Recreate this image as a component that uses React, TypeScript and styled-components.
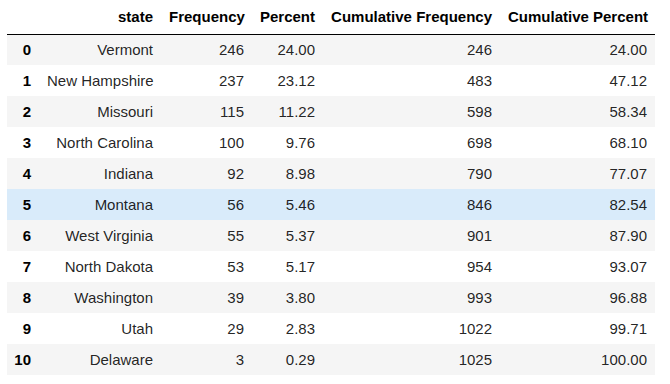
import React from "react";
import styled, { createGlobalStyle } from "styled-components";

const Global = createGlobalStyle`
  html, body { margin: 0; padding: 0; background: #fff; }
  body { font-family: "Liberation Sans", Arial, sans-serif; }
`;

const Wrap = styled.div`
  padding: 0 0 0 7px;
`;

const Table = styled.table`
  border-collapse: collapse;
  border-spacing: 0;
  table-layout: fixed;
  width: 648px;
  font-size: 15px;
  color: rgba(0, 0, 0, 0.87);
`;

const HeadRow = styled.tr`
  height: 34px;
  border-bottom: 1px solid #000;
`;

const HeadCell = styled.th`
  text-align: right;
  font-weight: bold;
  color: #000;
  padding: 0 8px;
  line-height: 17px;
  white-space: nowrap;
`;

const Row = styled.tr<{ $bg: string }>`
  height: 31px;
  background: ${(p) => p.$bg};
`;

const IndexCell = styled.th`
  text-align: right;
  font-weight: bold;
  color: #000;
  padding: 0 8px 0 0;
  line-height: 17px;
`;

const Cell = styled.td`
  text-align: right;
  padding: 0 8px;
  line-height: 17px;
  white-space: nowrap;
`;

const rows: [string, number, string, number, string][] = [
  ["Vermont", 246, "24.00", 246, "24.00"],
  ["New Hampshire", 237, "23.12", 483, "47.12"],
  ["Missouri", 115, "11.22", 598, "58.34"],
  ["North Carolina", 100, "9.76", 698, "68.10"],
  ["Indiana", 92, "8.98", 790, "77.07"],
  ["Montana", 56, "5.46", 846, "82.54"],
  ["West Virginia", 55, "5.37", 901, "87.90"],
  ["North Dakota", 53, "5.17", 954, "93.07"],
  ["Washington", 39, "3.80", 993, "96.88"],
  ["Utah", 29, "2.83", 1022, "99.71"],
  ["Delaware", 3, "0.29", 1025, "100.00"],
];

const widths = [32, 122, 91, 71, 177, 155];

export default function App() {
  return (
    <Wrap>
      <Global />
      <Table>
        <colgroup>
          {widths.map((w, i) => (
            <col key={i} style={{ width: w }} />
          ))}
        </colgroup>
        <thead>
          <HeadRow>
            <HeadCell />
            <HeadCell>state</HeadCell>
            <HeadCell>Frequency</HeadCell>
            <HeadCell>Percent</HeadCell>
            <HeadCell>Cumulative Frequency</HeadCell>
            <HeadCell>Cumulative Percent</HeadCell>
          </HeadRow>
        </thead>
        <tbody>
          {rows.map((r, i) => (
            <Row key={i} $bg={i === 5 ? "#d9ebfa" : i % 2 === 0 ? "#f5f5f5" : "#ffffff"}>
              <IndexCell>{i}</IndexCell>
              <Cell>{r[0]}</Cell>
              <Cell>{r[1]}</Cell>
              <Cell>{r[2]}</Cell>
              <Cell>{r[3]}</Cell>
              <Cell>{r[4]}</Cell>
            </Row>
          ))}
        </tbody>
      </Table>
    </Wrap>
  );
}
